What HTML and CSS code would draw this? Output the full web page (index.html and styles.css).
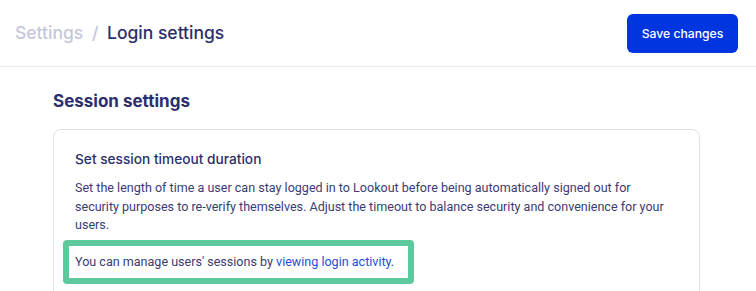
FILE: index.html
```html
<!DOCTYPE html>
<html lang="en">
<head>
    <meta charset="UTF-8">
    <meta name="viewport" content="width=device-width, initial-scale=1.0">
    <title>Login settings</title>
    <link rel="stylesheet" href="styles.css">
</head>
<body>
    <header class="topbar">
        <div class="crumbs">
            <span class="crumb-parent">Settings</span>
            <span class="crumb-sep">/</span>
            <span class="crumb-current">Login settings</span>
        </div>
        <button class="btn-save">Save changes</button>
    </header>

    <main class="content">
        <h2 class="section-title">Session settings</h2>
        <div class="card">
            <h3 class="card-title">Set session timeout duration</h3>
            <p class="card-text">Set the length of time a user can stay logged in to Lookout before being automatically signed out for security purposes to re-verify themselves. Adjust the timeout to balance security and convenience for your users.</p>
            <div class="highlight">
                You can manage users' sessions by <a href="#">viewing login activity</a>.
            </div>
        </div>
    </main>
</body>
</html>
```

FILE: styles.css
```css
body {
    margin: 0;
    font-family: Inter, "Noto Sans", sans-serif;
    background-color: #fff;
    color: #2c2f6b;
    overflow: hidden;
}
.topbar {
    height: 66px;
    display: flex;
    align-items: center;
    justify-content: space-between;
    padding: 0 18px 0 15px;
    border-bottom: 1px solid #ececf3;
}
.crumbs {
    font-size: 17.5px;
    font-weight: 500;
    padding-bottom: 1px;
}
.crumb-parent {
    color: #c6c7d9;
}
.crumb-sep {
    color: #c6c7d9;
    margin: 0 4px;
}
.crumb-current {
    color: #2c2f6b;
}
.btn-save {
    font-family: inherit;
    background-color: #0035e0;
    color: #fff;
    border: none;
    border-radius: 6px;
    font-size: 12.2px;
    font-weight: 500;
    width: 111px;
    height: 39px;
}
.content {
    padding: 24px 56px 0 53px;
}
.section-title {
    margin: 0 0 18px;
    font-size: 17px;
    font-weight: 700;
    color: #2c2f6b;
}
.card {
    border: 1px solid #dfdfea;
    border-radius: 8px;
    padding: 21px 21px 20px;
}
.card-title {
    margin: 0 0 12px;
    font-size: 13.7px;
    font-weight: 500;
    color: #2c2f6b;
}
.card-text {
    margin: 0 0 5px;
    max-width: 602px;
    font-family: Roboto, sans-serif;
    font-size: 12.55px;
    line-height: 18.5px;
    color: #3a3c74;
}
.highlight {
    display: inline-block;
    margin-left: -12px;
    border: 6px solid #5fc99e;
    border-radius: 4px;
    padding: 7px 14px 7px 6px;
    font-family: Roboto, sans-serif;
    font-size: 12.55px;
    line-height: 18px;
    color: #3a3c74;
}
.highlight a {
    color: #1e4fd9;
    text-decoration: none;
}
```
